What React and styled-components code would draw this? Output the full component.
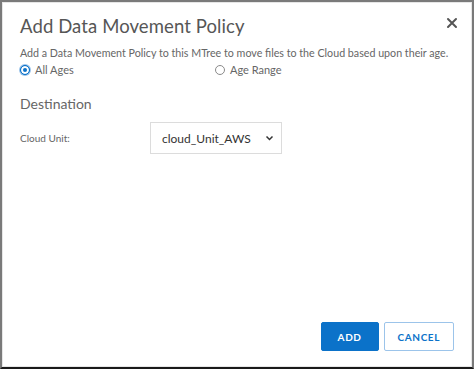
import React from 'react';
import styled, { createGlobalStyle } from 'styled-components';

const GlobalStyle = createGlobalStyle`
    html, body {
        margin: 0;
        padding: 0;
        background: #fff;
    }
    body {
        font-family: Lato, "Open Sans", sans-serif;
    }
`;

const Frame = styled.div`
    width: 474px;
    height: 369px;
    box-sizing: border-box;
    border: 2px solid #7a7a7a;
    border-bottom: 2px solid #1a1a1a;
    background: #fff;
`;

const Dialog = styled.div`
    height: 100%;
    box-sizing: border-box;
    border: 1px solid #e6e6e6;
    padding: 12px 17px 15px 17px;
    display: flex;
    flex-direction: column;
`;

const Header = styled.div`
    display: flex;
    justify-content: space-between;
    align-items: flex-start;
`;

const Title = styled.h2`
    margin: 0;
    font-size: 18.5px;
    font-weight: 400;
    color: #565656;
    letter-spacing: 0.1px;
`;

const CloseButton = styled.button`
    border: none;
    background: none;
    padding: 0;
    margin: 2px -5px 0 0;
    width: 14px;
    height: 14px;
    color: #555;
    cursor: pointer;
`;

const Description = styled.p`
    margin: 9px 0 0 0;
    font-size: 10.7px;
    color: #666;
    white-space: nowrap;
`;

const RadioRow = styled.div`
    display: grid;
    grid-template-columns: 195px auto;
    margin-top: 4px;
`;

const RadioLabel = styled.label`
    display: flex;
    align-items: center;
    gap: 5px;
    font-size: 11px;
    color: #666;
`;

const RadioDot = styled.span`
    width: 10px;
    height: 10px;
    border-radius: 50%;
    box-sizing: border-box;
    border: 1px solid ${p => (p.$checked ? '#0b72c9' : '#8a8a8a')};
    background: ${p => (p.$checked ? '#0b72c9' : '#fff')};
    box-shadow: ${p => (p.$checked ? 'inset 0 0 0 2px #fff, 0 0 0 1px #9cc4ea' : 'none')};
`;

const Section = styled.h3`
    margin: 19px 0 0 0;
    font-size: 14px;
    font-weight: 400;
    color: #666;
`;

const FieldRow = styled.div`
    display: grid;
    grid-template-columns: 130px auto;
    align-items: center;
    margin-top: 10px;
`;

const FieldLabel = styled.span`
    font-size: 10px;
    color: #666;
`;

const Select = styled.div`
    width: 132px;
    height: 32px;
    box-sizing: border-box;
    border: 1px solid #dcdcdc;
    display: flex;
    align-items: center;
    justify-content: space-between;
    padding: 0 7px 0 11px;
    font-size: 12px;
    color: #333;
`;

const Footer = styled.div`
    margin-top: auto;
    display: flex;
    justify-content: flex-end;
    gap: 5px;
`;

const Button = styled.button`
    height: 29px;
    box-sizing: border-box;
    padding: 0 ${p => (p.$primary ? '16px' : '13px')};
    min-width: ${p => (p.$primary ? '56px' : '70px')};
    font-family: Lato, "Open Sans", sans-serif;
    font-size: 10px;
    font-weight: 700;
    letter-spacing: 0.6px;
    border-radius: 2px;
    border: 1px solid ${p => (p.$primary ? '#0b72c9' : '#9cc4ea')};
    background: ${p => (p.$primary ? '#0b72c9' : '#fff')};
    color: ${p => (p.$primary ? '#fff' : '#0b72c9')};
    cursor: pointer;
`;

const App = () => {
    return (
        <>
            <GlobalStyle />
            <Frame>
                <Dialog>
                    <Header>
                        <Title>Add Data Movement Policy</Title>
                        <CloseButton aria-label="Close">
                            <svg width="12" height="12" viewBox="0 0 12 12">
                                <path d="M2 2 L10 10 M10 2 L2 10" stroke="currentColor" strokeWidth="2" strokeLinecap="round" />
                            </svg>
                        </CloseButton>
                    </Header>
                    <Description>Add a Data Movement Policy to this MTree to move files to the Cloud based upon their age.</Description>
                    <RadioRow>
                        <RadioLabel><RadioDot $checked />All Ages</RadioLabel>
                        <RadioLabel><RadioDot />Age Range</RadioLabel>
                    </RadioRow>
                    <Section>Destination</Section>
                    <FieldRow>
                        <FieldLabel>Cloud Unit:</FieldLabel>
                        <Select>
                            cloud_Unit_AWS
                            <svg width="9" height="6" viewBox="0 0 9 6">
                                <path d="M1.5 1.5 L4.5 4.5 L7.5 1.5" fill="none" stroke="#333" strokeWidth="1.5" />
                            </svg>
                        </Select>
                    </FieldRow>
                    <Footer>
                        <Button $primary>ADD</Button>
                        <Button>CANCEL</Button>
                    </Footer>
                </Dialog>
            </Frame>
        </>
    );
};

export default App;
